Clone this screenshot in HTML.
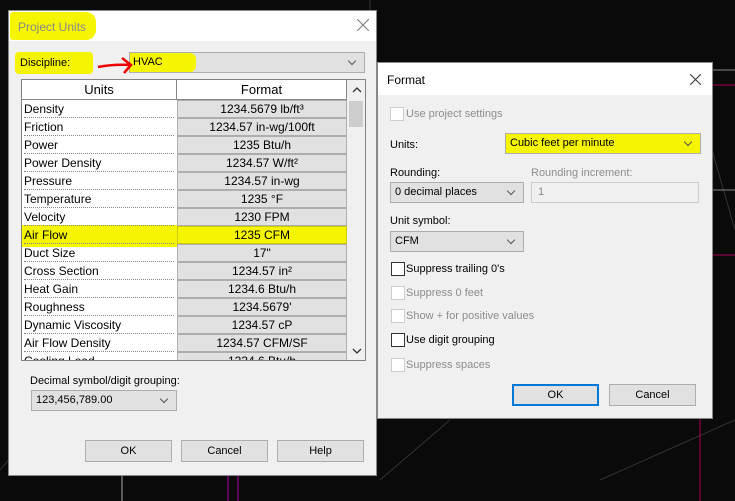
<!DOCTYPE html><html><head><style>
body{margin:0;width:735px;height:501px;background:#0a0a0a;overflow:hidden;position:relative;font-family:"Liberation Sans",sans-serif;font-size:11px;color:#000}
.a{position:absolute}
.dlg{background:#f0f0f0;border:1px solid #888}
.tb{background:#fff;position:absolute;left:0;right:0;top:0}
.combo{position:absolute;background:#e1e1e1;border:1px solid #adadad;box-sizing:border-box;padding-left:4px;line-height:18px}
.combo:after{content:"";position:absolute;right:9px;top:5px;width:5px;height:5px;border-right:1px solid #555;border-bottom:1px solid #555;transform:rotate(45deg)}
.btn{position:absolute;background:#e1e1e1;border:1px solid #adadad;box-sizing:border-box;text-align:center;line-height:20px}
.row{position:absolute;left:0;height:18px;width:325px;font-size:12px}
.row .u{position:absolute;left:2px;width:150px;line-height:18px;border-bottom:1px dotted #888;height:17px}
.row .f{position:absolute;left:155px;width:168px;height:16px;background:#e1e1e1;border:1px solid #adadad;text-align:center;line-height:16px}
.cb{position:absolute;width:12px;height:12px;border:1px solid #333;background:#fff}
.cb.d{border-color:#ccc}
.g{color:#8d8d8d}
.hl{background:#f5f500}
</style></head><body>
<svg class="a" style="left:0;top:0" width="735" height="501">
<g stroke="#333" stroke-width="1">
<line x1="0" y1="470" x2="60" y2="400"/><line x1="380" y1="480" x2="450" y2="420"/>
<line x1="712" y1="150" x2="735" y2="230"/><line x1="600" y1="480" x2="735" y2="420"/>
<line x1="370" y1="0" x2="370" y2="10"/>
</g>
<line x1="712" y1="70" x2="735" y2="70" stroke="#888"/>
<line x1="712" y1="85" x2="735" y2="85" stroke="#a05"/>
<line x1="712" y1="190" x2="735" y2="190" stroke="#888"/>
<line x1="712" y1="255" x2="735" y2="255" stroke="#a05"/>
<line x1="228" y1="475" x2="228" y2="501" stroke="#a0a"/><line x1="238" y1="475" x2="238" y2="501" stroke="#a0a"/>
<line x1="122" y1="475" x2="122" y2="501" stroke="#aaa"/>
<line x1="700" y1="417" x2="700" y2="501" stroke="#a05"/>
</svg>

<div class="a dlg" style="left:8px;top:10px;width:367px;height:464px">
 <div class="tb" style="height:30px"></div>
 <div class="a hl" style="left:1px;top:1px;width:86px;height:28px;border-radius:3px 10px 10px 3px"></div>
 <div class="a" style="left:9px;top:9px;font-size:12px;color:#888">Project Units</div>
 <svg class="a" style="left:348px;top:8px" width="12" height="12"><path d="M0 0L12 12M12 0L0 12" stroke="#777" stroke-width="1"/></svg>
 <div class="a hl" style="left:6px;top:41px;width:78px;height:22px;border-radius:4px"></div>
 <div class="a" style="left:11px;top:46px">Discipline:</div>
 <div class="combo" style="left:120px;top:41px;width:236px;height:21px;line-height:19px"></div>
 <div class="a hl" style="left:121px;top:42px;width:66px;height:19px;border-radius:0 6px 6px 0"></div>
 <div class="a" style="left:124px;top:45px">HVAC</div>
 <svg class="a" style="left:85px;top:42px" width="42" height="24"><path d="M4 14 Q20 11 36 12" stroke="#e00" stroke-width="2.5" fill="none"/><path d="M28 5 L37 12 L30 20" stroke="#e00" stroke-width="2.5" fill="none"/></svg>
 <div class="a" style="left:12px;top:68px;width:343px;height:280px;background:#fff;border:1px solid #828282;overflow:hidden">
  <div class="a" style="left:0;top:0;width:154px;height:19px;border-right:1px solid #888;border-bottom:1px solid #888;text-align:center;line-height:19px;font-size:13px">Units</div>
  <div class="a" style="left:155px;top:0;width:169px;height:19px;border-bottom:1px solid #888;border-right:1px solid #888;text-align:center;line-height:19px;font-size:13px">Format</div>
  <div class="a" style="left:325px;top:0;width:18px;height:280px;background:#f0f0f0"></div>
  <div class="a" style="left:327px;top:21px;width:14px;height:26px;background:#cdcdcd"></div>
  <svg class="a" style="left:330px;top:7px" width="10" height="6"><path d="M1 5L5 1L9 5" stroke="#333" fill="none" stroke-width="1.3"/></svg>
  <svg class="a" style="left:330px;top:268px" width="10" height="6"><path d="M1 1L5 5L9 1" stroke="#333" fill="none" stroke-width="1.3"/></svg>
  <div class="a hl" style="left:0;top:145px;width:325px;height:22px"></div>
  <div class="a" style="left:0;top:20px">
   <div class="row" style="top:0"><div class="u">Density</div><div class="f">1234.5679 lb/ft³</div></div>
   <div class="row" style="top:18px"><div class="u">Friction</div><div class="f">1234.57 in-wg/100ft</div></div>
   <div class="row" style="top:36px"><div class="u">Power</div><div class="f">1235 Btu/h</div></div>
   <div class="row" style="top:54px"><div class="u">Power Density</div><div class="f">1234.57 W/ft²</div></div>
   <div class="row" style="top:72px"><div class="u">Pressure</div><div class="f">1234.57 in-wg</div></div>
   <div class="row" style="top:90px"><div class="u">Temperature</div><div class="f">1235 °F</div></div>
   <div class="row" style="top:108px"><div class="u">Velocity</div><div class="f">1230 FPM</div></div>
   <div class="row" style="top:126px"><div class="u">Air Flow</div><div class="f" style="background:#f5f500;border-color:#cc0">1235 CFM</div></div>
   <div class="row" style="top:144px"><div class="u">Duct Size</div><div class="f">17"</div></div>
   <div class="row" style="top:162px"><div class="u">Cross Section</div><div class="f">1234.57 in²</div></div>
   <div class="row" style="top:180px"><div class="u">Heat Gain</div><div class="f">1234.6 Btu/h</div></div>
   <div class="row" style="top:198px"><div class="u">Roughness</div><div class="f">1234.5679'</div></div>
   <div class="row" style="top:216px"><div class="u">Dynamic Viscosity</div><div class="f">1234.57 cP</div></div>
   <div class="row" style="top:234px"><div class="u">Air Flow Density</div><div class="f">1234.57 CFM/SF</div></div>
   <div class="row" style="top:252px"><div class="u">Cooling Load</div><div class="f">1234.6 Btu/h</div></div>
  </div>
 </div>
 <div class="a" style="left:21px;top:364px">Decimal symbol/digit grouping:</div>
 <div class="combo" style="left:22px;top:379px;width:146px;height:21px">123,456,789.00</div>
 <div class="btn" style="left:76px;top:429px;width:87px;height:22px">OK</div>
 <div class="btn" style="left:172px;top:429px;width:87px;height:22px">Cancel</div>
 <div class="btn" style="left:268px;top:429px;width:87px;height:22px">Help</div>
</div>

<div class="a dlg" style="left:377px;top:62px;width:334px;height:355px">
 <div class="tb" style="height:32px"></div>
 <div class="a" style="left:9px;top:10px;font-size:12px">Format</div>
 <svg class="a" style="left:312px;top:11px" width="11" height="11"><path d="M0 0L11 11M11 0L0 11" stroke="#333" stroke-width="1"/></svg>
 <div class="cb d" style="left:12px;top:44px"></div><div class="a g" style="left:28px;top:45px">Use project settings</div>
 <div class="a" style="left:12px;top:76px">Units:</div>
 <div class="combo hl" style="left:127px;top:70px;width:196px;height:21px;border-color:#adadad">Cubic feet per minute</div>
 <div class="a" style="left:12px;top:104px">Rounding:</div>
 <div class="a g" style="left:153px;top:104px">Rounding increment:</div>
 <div class="combo" style="left:12px;top:119px;width:134px;height:21px">0 decimal places</div>
 <div class="a" style="left:153px;top:119px;border:1px solid #ccc;background:#f0f0f0;color:#888;line-height:19px;padding-left:6px;box-sizing:border-box;width:168px;height:21px">1</div>
 <div class="a" style="left:12px;top:152px">Unit symbol:</div>
 <div class="combo" style="left:12px;top:168px;width:134px;height:21px">CFM</div>
 <div class="cb" style="left:13px;top:199px"></div><div class="a" style="left:28px;top:200px">Suppress trailing 0's</div>
 <div class="cb d" style="left:13px;top:223px"></div><div class="a g" style="left:28px;top:224px">Suppress 0 feet</div>
 <div class="cb d" style="left:13px;top:246px"></div><div class="a g" style="left:28px;top:247px">Show + for positive values</div>
 <div class="cb" style="left:13px;top:270px"></div><div class="a" style="left:28px;top:271px">Use digit grouping</div>
 <div class="cb d" style="left:13px;top:295px"></div><div class="a g" style="left:28px;top:296px">Suppress spaces</div>
 <div class="btn" style="left:134px;top:321px;width:87px;height:22px;border:2px solid #0078d7;line-height:18px">OK</div>
 <div class="btn" style="left:231px;top:321px;width:87px;height:22px">Cancel</div>
</div>
</body></html>
